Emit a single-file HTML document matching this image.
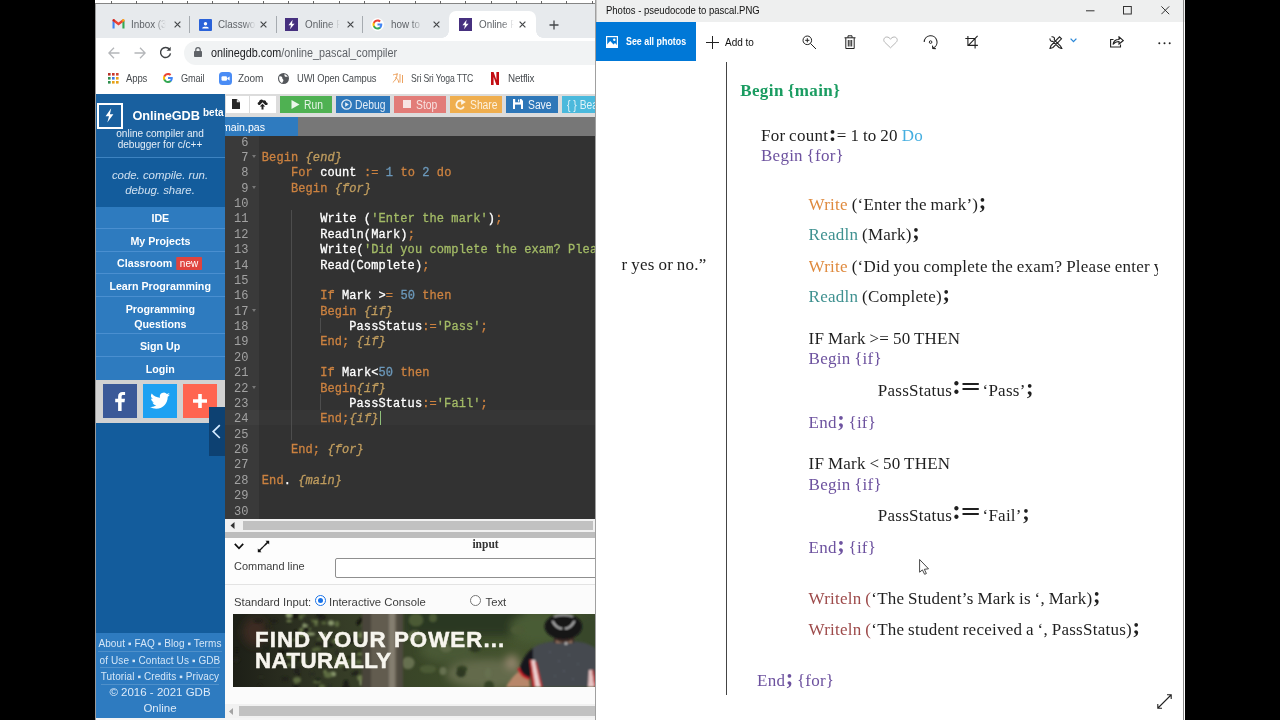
<!DOCTYPE html>
<html lang="en">
<head>
<meta charset="utf-8">
<title>OnlineGDB and Photos</title>
<style>
*{box-sizing:border-box;margin:0;padding:0}
html,body{width:1280px;height:720px;overflow:hidden;background:#000;font-family:"Liberation Sans",sans-serif;}
.abs{position:absolute}
#stage{position:relative;width:1280px;height:720px;overflow:hidden;background:#000;opacity:0.9999}
/* ---------- browser window ---------- */
#browser{position:absolute;left:95px;top:0;width:501px;height:720px;background:#fff;overflow:hidden}
#ruler{position:absolute;left:0;top:0;width:501px;height:4px;background:#fff;border-bottom:1px solid #858585}
#tabstrip{position:absolute;left:0;top:4px;width:501px;height:34px;background:#e7eaed}
.tab{position:absolute;top:0;height:34px;font-size:12px;color:#5f6368;white-space:nowrap}
.tab .tt{position:absolute;top:13px;left:0;font-size:12px;line-height:14px;letter-spacing:-0.1px}
.tabx{position:absolute;top:14px;width:11px;height:11px}
.tsep{position:absolute;top:12px;width:1px;height:17px;background:#a6abb0}
#toolbar{position:absolute;left:0;top:38px;width:501px;height:29px;background:#fff}
#urlpill{position:absolute;left:89px;top:3px;width:430px;height:24px;border-radius:12px;background:#f1f3f4}
#bookmarks{position:absolute;left:0;top:67px;width:501px;height:27px;background:#fff}
.bm{position:absolute;top:3.900px;font-size:10.6px;line-height:14px;color:#484c50;white-space:nowrap;letter-spacing:-0.15px}
/* ---------- page ---------- */
#page{position:absolute;left:0;top:94px;width:501px;height:626px;background:#fff;overflow:hidden}
#sidebar{position:absolute;left:0;top:0;width:130px;height:624px;background:#135c9c;color:#fff;text-align:center}

#sb-top{position:absolute;left:0;top:0;width:130px;height:63px;background:#19609f}
#logo{position:absolute;left:2px;top:9px;width:26px;height:26px;border:2.5px solid #fff}
#brand{position:absolute;left:37.500px;top:14.200px;font-size:12.8px;line-height:16px;font-weight:bold;color:#fff;white-space:nowrap;letter-spacing:-0.1px}
#beta{position:absolute;left:108px;top:13.200px;font-size:10px;line-height:12px;font-weight:bold;color:#fff}
.sub{position:absolute;left:0;width:130px;text-align:center;font-size:10.1px;line-height:12px;color:#e6eef7;white-space:nowrap}
#sb-sep{position:absolute;left:0;top:63px;width:130px;height:1px;background:#3d83c1}
.slog{position:absolute;left:0;width:130px;text-align:center;font-size:11.4px;line-height:14px;font-style:italic;color:#cfe0f0;white-space:nowrap}
#nav{position:absolute;left:0;top:113px;width:130px;height:173px;background:#2e7bbf}
.ni{position:absolute;left:0;width:130px;text-align:center;font-size:11.2px;line-height:14.5px;font-weight:bold;color:#fff;border-bottom:1px solid #4a8fd0;white-space:nowrap}
.ni>span.w{display:inline-block;transform:scaleX(.955)}
.new{display:inline-block;background:#e0443e;color:#fff;font-weight:normal;font-size:10.5px;line-height:13px;padding:0 4px;margin-left:4px;vertical-align:0.5px;border-radius:1px}
#social{position:absolute;left:0;top:286px;width:130px;height:43px;background:#d2d2d2}
.soc{position:absolute;top:4px;width:34px;height:34px}
#handle{position:absolute;left:114px;top:313px;width:16px;height:49px;background:#0d4172}
#footer{position:absolute;left:0;top:538.500px;width:130px;height:85.500px;background:#2e7bc0;color:#d4e6f7;text-align:center}
.fl{position:absolute;left:0;width:130px;text-align:center;font-size:10px;line-height:13px;white-space:nowrap;color:#d4e6f7;letter-spacing:0.1px}
.fl>span{display:inline-block;border-bottom:1px solid rgba(255,255,255,.16);padding-bottom:0.500px}
.fl u{text-decoration:none}
.fc{position:absolute;left:0;width:130px;text-align:center;font-size:11.5px;line-height:14px;white-space:nowrap;color:#dceaf8}

.sx{display:inline-block;transform-origin:0 50%;white-space:nowrap}
.tabt{position:absolute;top:13px;font-size:10.6px;line-height:14px;color:#5f6368;white-space:nowrap;overflow:hidden;height:14px}
.tabt i{position:absolute;right:0;top:0;width:14px;height:14px;font-style:normal}
#acttab{position:absolute;left:354px;top:7px;width:87px;height:27px;background:#fff;border-radius:7px 7px 0 0}
#acttab:before,#acttab:after{content:"";position:absolute;bottom:0;width:7px;height:7px;background:radial-gradient(circle at 0 0,rgba(255,255,255,0) 6.5px,#fff 7px)}
#acttab:before{left:-7px}
#acttab:after{right:-7px;background:radial-gradient(circle at 100% 0,rgba(255,255,255,0) 6.5px,#fff 7px)}
#winl{position:absolute;left:0;top:4px;width:1px;height:716px;background:#9a9a9a;z-index:50}
#winr{position:absolute;left:500px;top:0;width:1px;height:720px;background:#a0a0a0;z-index:50}

/* ---------- IDE ---------- */
#idebar{position:absolute;left:130px;top:0;width:371px;height:23px;background:#dcdcdc}
.btn{position:absolute;top:2px;height:17px;color:#f2f6fa;font-size:11.6px;line-height:17px;white-space:nowrap;overflow:hidden}
.btn .t{position:absolute;top:0.800px;font-size:12px;transform:scaleX(.86);transform-origin:0 50%}
#filetabs{position:absolute;left:130px;top:23px;width:371px;height:19px;background:#777}
#ftab{position:absolute;left:0;top:0;width:73px;height:19px;background:#2f7bbf;color:#fff;font-size:10.6px;line-height:21px;white-space:nowrap;overflow:hidden}
#editor{position:absolute;left:130px;top:42px;width:371px;height:383px;background:#323232;overflow:hidden}
#gutter{position:absolute;left:0;top:0;width:34px;height:383px;background:#3a3a3a}
#code{position:absolute;left:0;top:-0.500px;width:600px;-webkit-text-stroke:0.3px;font-family:"Liberation Mono",monospace;font-size:12px;letter-spacing:0.09px;color:#fff}
.ln{position:relative;height:15.375px;line-height:15.375px;white-space:pre}
.ln .n{position:absolute;left:0;width:23.5px;text-align:right;color:#a2a2a2;-webkit-text-stroke:0}
.ln .c{position:absolute;left:36.8px}
.ln .f{position:absolute;left:27px;top:4.500px;width:0;height:0;border-left:2.5px solid transparent;border-right:2.5px solid transparent;border-top:3px solid #777}
.k{color:#cc8240}.s{color:#a3bb66}.d{color:#6c99bb}.m{color:#bf9c5e;font-style:italic}
.guide{position:absolute;width:1px;background:#4d4d4d}
#hscroll{position:absolute;left:130px;top:425px;width:371px;height:13px;background:#f1f1f1}
#gband{position:absolute;left:130px;top:438px;width:371px;height:6px;background:#bdbdbd}
#panel{position:absolute;left:130px;top:444px;width:371px;height:182px;background:#fbfbfb;color:#333}

#panel .lbl{position:absolute;font-size:11.3px;line-height:14px;color:#3d3d3d;white-space:nowrap}
.radio{position:absolute;width:11px;height:11px;border-radius:50%;border:1px solid #767676;background:#fff}
#ad{position:absolute;left:8px;top:76px;width:380px;height:73px;overflow:hidden;background:#3a3d28}
.adt{position:absolute;left:22px;font-weight:bold;font-size:22.3px;line-height:22px;color:#f7f5ee;white-space:nowrap;letter-spacing:0.75px;-webkit-text-stroke:0.5px #f7f5ee}
#vscroll{position:absolute;left:130px;top:610px;width:371px;height:14px;background:#f1f1f1}

/* ---------- Photos window ---------- */
#photos{position:absolute;left:596px;top:0;width:589px;height:720px;background:#fff;overflow:hidden}
#ptitle{position:absolute;left:0;top:0;width:589px;height:22.3px;background:#eeefef}
#pbtn{position:absolute;left:0;top:22.300px;width:100px;height:38.300px;background:#0078d7}
.pt{position:absolute;margin-top:1px;word-spacing:-0.75px;font-family:"Liberation Serif",serif;font-size:17px;line-height:20px;letter-spacing:0.25px;white-space:nowrap;color:#1f1f1f}
.pt b.sc{font-size:22.5px;line-height:10px;letter-spacing:0;font-weight:bold;display:inline-block;margin:0 0 0 0.5px;transform:translateY(-0.8px)}
.pt b.co{font-size:27px;line-height:10px;letter-spacing:0;font-weight:bold;display:inline-block;margin:0 0 0 0;transform:translateY(-2px)}
.pt b.co2{font-size:23px;line-height:10px;letter-spacing:0;font-weight:bold;display:inline-block;margin:0 0.5px 0 0.5px;transform:translateY(0)}
.gr{color:#1a9c61}.pu{color:#6d529f}.or{color:#df8a3e}.te{color:#3f9190}.lb{color:#45aee0}.br{color:#9d4a4a}
</style>
</head>
<body>
<div id="stage">
  <div id="browser">
    <div id="ruler"><div class="abs" style="left:16.0px;top:1px;width:1px;height:3px;background:#666"></div><div class="abs" style="left:41.3px;top:1px;width:1px;height:3px;background:#666"></div><div class="abs" style="left:66.6px;top:1px;width:1px;height:3px;background:#666"></div><div class="abs" style="left:91.9px;top:1px;width:1px;height:3px;background:#666"></div><div class="abs" style="left:117.2px;top:1px;width:1px;height:3px;background:#666"></div><div class="abs" style="left:142.5px;top:1px;width:1px;height:3px;background:#666"></div><div class="abs" style="left:167.8px;top:1px;width:1px;height:3px;background:#666"></div><div class="abs" style="left:193.1px;top:1px;width:1px;height:3px;background:#666"></div><div class="abs" style="left:218.4px;top:1px;width:1px;height:3px;background:#666"></div><div class="abs" style="left:243.7px;top:1px;width:1px;height:3px;background:#666"></div><div class="abs" style="left:269.0px;top:1px;width:1px;height:3px;background:#666"></div><div class="abs" style="left:294.3px;top:1px;width:1px;height:3px;background:#666"></div><div class="abs" style="left:319.6px;top:1px;width:1px;height:3px;background:#666"></div><div class="abs" style="left:344.9px;top:1px;width:1px;height:3px;background:#666"></div><div class="abs" style="left:370.2px;top:1px;width:1px;height:3px;background:#666"></div><div class="abs" style="left:395.5px;top:1px;width:1px;height:3px;background:#666"></div><div class="abs" style="left:420.8px;top:1px;width:1px;height:3px;background:#666"></div><div class="abs" style="left:446.1px;top:1px;width:1px;height:3px;background:#666"></div><div class="abs" style="left:471.4px;top:1px;width:1px;height:3px;background:#666"></div><div class="abs" style="left:496.7px;top:1px;width:1px;height:3px;background:#666"></div></div><div id="winl"></div><div id="winr"></div>
    <div id="tabstrip">
      <svg class="abs" style="left:17px;top:15px" width="13" height="10" viewBox="0 0 13 10"><path d="M0.500 9.500 V1.400 L2.600 3 V9.500 Z" fill="#4285f4"/><path d="M12.500 9.500 V1.400 L10.400 3 V9.500 Z" fill="#34a853"/><path d="M0.500 1.400 C0.500 0.300 1.700 -0.200 2.600 0.500 L6.500 3.500 L10.400 0.500 C11.300 -0.200 12.500 0.300 12.500 1.400 L12.500 2 L6.500 6.500 L0.500 2 Z" fill="#ea4335"/><path d="M0.500 1.400 L2.600 3 L2.600 0.500 C1.700 -0.200 0.500 0.300 0.500 1.400Z" fill="#c5221f"/><path d="M12.500 1.400 L10.400 3 L10.400 0.500 C11.300 -0.200 12.500 0.300 12.500 1.400Z" fill="#fbbc04"/></svg>
      <div class="tabt" style="left:36px;width:37px"><span class="sx" style="transform:scaleX(.93)">Inbox (3)</span><i style="background:linear-gradient(90deg,rgba(231,234,237,0),#e7eaed 85%)"></i></div>
      <svg class="abs" style="left:79px;top:17px" width="7" height="7" viewBox="0 0 8 8"><path d="M0.7 0.7 L7.3 7.300 M7.300 0.7 L0.7 7.300" stroke="#44474a" stroke-width="1.350" fill="none"/></svg>
      <div class="tsep" style="left:94px"></div>
      <svg class="abs" style="left:104px;top:15px" width="13" height="12" viewBox="0 0 13 12"><rect width="13" height="12" rx="1" fill="#2a62d9"/><circle cx="6.500" cy="4.700" r="1.700" fill="#fff"/><path d="M3.300 9 C3.300 7.300 9.700 7.300 9.700 9 V9.400 H3.300Z" fill="#fff"/></svg>
      <div class="tabt" style="left:123px;width:40px"><span class="sx" style="transform:scaleX(.93)">Classwork</span><i style="background:linear-gradient(90deg,rgba(231,234,237,0),#e7eaed 85%)"></i></div>
      <svg class="abs" style="left:165px;top:17px" width="7" height="7" viewBox="0 0 8 8"><path d="M0.7 0.7 L7.3 7.300 M7.300 0.7 L0.7 7.300" stroke="#44474a" stroke-width="1.350" fill="none"/></svg>
      <div class="tsep" style="left:181px"></div>
      <svg class="abs" style="left:190px;top:14px" width="13" height="13" viewBox="0 0 13 13"><rect width="13" height="13" fill="#46307f"/><path d="M7.6 1.800 L3.500 7.200 L6 7.200 L5 11.300 L9.600 5.700 L7 5.700 Z" fill="#fff"/></svg>
      <div class="tabt" style="left:210px;width:37px"><span class="sx" style="transform:scaleX(.93)">Online Pascal</span><i style="background:linear-gradient(90deg,rgba(231,234,237,0),#e7eaed 85%)"></i></div>
      <svg class="abs" style="left:252px;top:17px" width="7" height="7" viewBox="0 0 8 8"><path d="M0.7 0.7 L7.3 7.300 M7.300 0.7 L0.7 7.300" stroke="#44474a" stroke-width="1.350" fill="none"/></svg>
      <div class="tsep" style="left:267px"></div>
      <svg class="abs" style="left:276px;top:14px" width="13" height="13" viewBox="0 0 13 13"><circle cx="6.500" cy="6.500" r="6.500" fill="#fff"/><g transform="translate(1.500,1.500)"><g transform="scale(0.4167)"><path d="M23.500 12.270 c0-.85-.08-1.670-.22-2.450 H12 v4.640 h6.450 c-.28 1.500-1.120 2.770-2.390 3.620 v3.010 h3.870 c2.260-2.090 3.570-5.160 3.570-8.820z" fill="#4285f4"/><path d="M12 24 c3.240 0 5.950-1.070 7.930-2.910 l-3.870-3.010 c-1.070.72-2.450 1.150-4.060 1.150 -3.120 0-5.770-2.110-6.710-4.950 H1.290 v3.110 C3.260 21.300 7.310 24 12 24z" fill="#34a853"/><path d="M5.290 14.280 c-.24-.72-.38-1.490-.38-2.280 s.14-1.560.38-2.280 V6.610 H1.290 C.47 8.230 0 10.060 0 12 s.47 3.770 1.290 5.390 l4-3.110z" fill="#fbbc05"/><path d="M12 4.770 c1.760 0 3.340.61 4.590 1.800 l3.430-3.430 C17.950 1.190 15.240 0 12 0 7.310 0 3.260 2.700 1.290 6.610 l4 3.110 c.94-2.840 3.590-4.950 6.710-4.950z" fill="#ea4335"/></g></g></svg>
      <div class="tabt" style="left:296px;width:34px"><span class="sx" style="transform:scaleX(.93)">how to use</span><i style="background:linear-gradient(90deg,rgba(231,234,237,0),#e7eaed 85%)"></i></div>
      <svg class="abs" style="left:338px;top:17px" width="7" height="7" viewBox="0 0 8 8"><path d="M0.7 0.7 L7.3 7.300 M7.300 0.7 L0.7 7.300" stroke="#44474a" stroke-width="1.350" fill="none"/></svg>
      <div id="acttab"></div>
      <svg class="abs" style="left:364px;top:14px" width="13" height="13" viewBox="0 0 13 13"><rect width="13" height="13" fill="#46307f"/><path d="M7.6 1.800 L3.500 7.200 L6 7.200 L5 11.300 L9.600 5.700 L7 5.700 Z" fill="#fff"/></svg>
      <div class="tabt" style="left:384px;width:37px"><span class="sx" style="transform:scaleX(.93)">Online Pascal</span><i style="background:linear-gradient(90deg,rgba(255,255,255,0),#fff 85%)"></i></div>
      <svg class="abs" style="left:424px;top:17px" width="7" height="7" viewBox="0 0 8 8"><path d="M0.7 0.7 L7.3 7.300 M7.300 0.7 L0.7 7.300" stroke="#44474a" stroke-width="1.350" fill="none"/></svg>
      <svg class="abs" style="left:454px;top:16px" width="10" height="10" viewBox="0 0 10 10"><path d="M5 0.500 V9.500 M0.500 5 H9.500" stroke="#44474a" stroke-width="1.300" fill="none"/></svg>
    </div>
    <div id="toolbar">
      <svg class="abs" style="left:13px;top:9px" width="12" height="12" viewBox="0 0 12 12"><path d="M11.500 6 H1.200 M6 0.800 L0.800 6 L6 11.200" stroke="#b4b6b9" stroke-width="1.300" fill="none"/></svg>
      <svg class="abs" style="left:39px;top:9px" width="12" height="12" viewBox="0 0 12 12"><path d="M0.500 6 H10.800 M6 0.800 L11.200 6 L6 11.200" stroke="#b4b6b9" stroke-width="1.300" fill="none"/></svg>
      <svg class="abs" style="left:64px;top:8px" width="13" height="13" viewBox="0 0 13 13"><path d="M10.600 3.500 A5 5 0 1 0 11.500 7.300" stroke="#3f4245" stroke-width="1.400" fill="none"/><path d="M11.700 0.700 V4.800 H7.600 Z" fill="#3f4245"/></svg>
      <div id="urlpill"></div>
      <svg class="abs" style="left:99px;top:9px" width="8" height="10" viewBox="0 0 8 10"><rect x="0" y="4" width="8" height="6" rx="0.800" fill="#5f6368"/><path d="M1.800 4.500 V2.800 A2.200 2.200 0 0 1 6.200 2.800 V4.500" stroke="#5f6368" stroke-width="1.200" fill="none"/></svg>
      <div class="abs" style="left:116px;top:8.300px;font-size:12px;line-height:15px;color:#5f6368;white-space:nowrap"><span class="sx" style="transform:scaleX(.9)"><span style="color:#202124">onlinegdb.com</span>/online_pascal_compiler</span></div>
    </div>
    <div id="bookmarks">
      <svg class="abs" style="left:13px;top:6px" width="11" height="11" viewBox="0 0 11 11"><rect x="0" y="0" width="2.600" height="2.600" fill="#b5322a"/><rect x="4" y="0" width="2.600" height="2.600" fill="#c8372d"/><rect x="8" y="0" width="2.600" height="2.600" fill="#d2452f"/><rect x="0" y="4" width="2.600" height="2.600" fill="#2f8f4e"/><rect x="4" y="4" width="2.600" height="2.600" fill="#3b78e0"/><rect x="8" y="4" width="2.600" height="2.600" fill="#e6a117"/><rect x="0" y="8" width="2.600" height="2.600" fill="#2f8f4e"/><rect x="4" y="8" width="2.600" height="2.600" fill="#e6a117"/><rect x="8" y="8" width="2.600" height="2.600" fill="#e6a117"/></svg>
      <div class="bm" style="left:31px"><span class="sx" style="transform:scaleX(.9)">Apps</span></div>
      <svg class="abs" style="left:68px;top:6px" width="10" height="10" viewBox="0 0 10 10"><g transform="scale(0.4167)"><path d="M23.500 12.270 c0-.85-.08-1.670-.22-2.450 H12 v4.640 h6.450 c-.28 1.500-1.120 2.770-2.390 3.620 v3.010 h3.870 c2.260-2.090 3.570-5.160 3.570-8.820z" fill="#4285f4"/><path d="M12 24 c3.240 0 5.950-1.070 7.930-2.910 l-3.870-3.010 c-1.070.72-2.450 1.150-4.060 1.150 -3.120 0-5.770-2.110-6.710-4.950 H1.290 v3.110 C3.260 21.300 7.310 24 12 24z" fill="#34a853"/><path d="M5.290 14.280 c-.24-.72-.38-1.490-.38-2.280 s.14-1.560.38-2.280 V6.610 H1.290 C.47 8.230 0 10.060 0 12 s.47 3.770 1.290 5.390 l4-3.110z" fill="#fbbc05"/><path d="M12 4.770 c1.760 0 3.340.61 4.590 1.800 l3.430-3.430 C17.950 1.190 15.240 0 12 0 7.310 0 3.260 2.700 1.290 6.610 l4 3.110 c.94-2.840 3.590-4.950 6.710-4.950z" fill="#ea4335"/></g></svg>
      <div class="bm" style="left:86px"><span class="sx" style="transform:scaleX(.87)">Gmail</span></div>
      <svg class="abs" style="left:124px;top:5px" width="13" height="13" viewBox="0 0 13 13"><rect width="13" height="13" rx="3.500" fill="#4a8cf5"/><rect x="2.500" y="4.200" width="5.500" height="4.600" rx="1.200" fill="#fff"/><path d="M8.300 6 L10.600 4.400 V8.600 L8.300 7Z" fill="#fff"/></svg>
      <div class="bm" style="left:143px"><span class="sx" style="transform:scaleX(.95)">Zoom</span></div>
      <svg class="abs" style="left:183px;top:6px" width="11" height="11" viewBox="0 0 11 11"><circle cx="5.500" cy="5.500" r="5.500" fill="#54575b"/><path d="M1.300 3.500 C3 3 4.500 3.800 4.300 5.200 C4.200 6.200 5.600 6.200 5.400 7.500 C5.300 8.500 4.300 8.800 4.300 10 C2 9.500 0.600 6.500 1.300 3.500Z M6.300 0.900 C7 2 6 2.800 7 3.400 C8 4 9 3.200 9.800 4.200 C9.300 2.500 8 1.200 6.300 0.900Z" fill="#fff"/></svg>
      <div class="bm" style="left:202px"><span class="sx" style="transform:scaleX(.885)">UWI Open Campus</span></div>
      <svg class="abs" style="left:297px;top:6px" width="12" height="11" viewBox="0 0 12 11"><path d="M1 2 C3 1 5 1.500 6 0.800 M5 0.500 C5.500 4 3 8 0.800 9.500 M3.300 4.500 C5 5 6.500 7 6.800 9.800 M8 1 V9.500 M10.500 2 V10" stroke="#eb9d57" stroke-width="0.950" fill="none"/></svg>
      <div class="bm" style="left:316px"><span class="sx" style="transform:scaleX(.815)">Sri Sri Yoga TTC</span></div>
      <svg class="abs" style="left:396px;top:5px" width="8" height="13" viewBox="0 0 8 13"><path d="M0 0 H2.600 L5.400 8 V0 H8 V13 H5.400 L2.600 5 V13 H0Z" fill="#c20d13"/></svg>
      <div class="bm" style="left:413px"><span class="sx" style="transform:scaleX(.93)">Netflix</span></div>
    </div>
    <div id="page">
      <div id="idebar">
        <div class="btn" style="left:1px;width:23px;background:#fff"><svg class="abs" style="left:6px;top:3px" width="8" height="10" viewBox="0 0 8 10"><path d="M0 0 H4.800 L8 3.200 V10 H0Z" fill="#262626"/><path d="M4.800 0.300 V3.200 H7.700Z" fill="#e8e8e8"/></svg></div>
        <div class="btn" style="left:24.800px;width:26.200px;background:#fff"><svg class="abs" style="left:6.900px;top:3.200px" width="11" height="11" viewBox="0 0 11 11"><path d="M2.500 6 C0.300 6 0 3.300 2 2.900 C2.300 0.800 4.800 -0.200 6.200 1.400 C7.800 0.600 9.300 1.700 9.100 3.200 C11.200 3.400 11.200 6 9.200 6 H8.300 L5.500 3.300 L2.800 6Z" fill="#222"/><path d="M5.500 4.700 L8.200 7.400 H6.500 V10.400 H4.500 V7.400 H2.800Z" fill="#222"/></svg></div>
        <div class="btn" style="left:55px;width:52px;background:#4fb152;color:#e6f4e6"><svg class="abs" style="left:11px;top:4px" width="9" height="9" viewBox="0 0 9 9"><path d="M0.500 0 L8.500 4.500 L0.500 9Z" fill="#eaf6ea"/></svg><span class="t" style="left:24px">Run</span></div>
        <div class="btn" style="left:111px;width:54px;background:#2f78ba;color:#e3edf7"><svg class="abs" style="left:5px;top:3px" width="11" height="11" viewBox="0 0 11 11"><circle cx="5.500" cy="5.500" r="4.700" stroke="#e8f0f8" stroke-width="1.300" fill="none"/><path d="M4.200 3.300 L7.800 5.500 L4.200 7.700Z" fill="#e8f0f8"/></svg><span class="t" style="left:19px">Debug</span></div>
        <div class="btn" style="left:169px;width:52px;background:#e27c78;color:#f8e3e2"><svg class="abs" style="left:9px;top:4px" width="8" height="8" viewBox="0 0 8 8"><rect width="8" height="8" fill="#f7e4e3"/></svg><span class="t" style="left:22px">Stop</span></div>
        <div class="btn" style="left:225px;width:52px;background:#efae4e;color:#fdf1dd"><svg class="abs" style="left:5px;top:3px" width="11" height="11" viewBox="0 0 11 11"><path d="M9 7.500 A4 4 0 1 1 6.500 1.800" stroke="#fdf3e2" stroke-width="1.700" fill="none"/><path d="M5.800 0 L10.800 3 L6.300 6Z" fill="#fdf3e2"/></svg><span class="t" style="left:20px">Share</span></div>
        <div class="btn" style="left:281px;width:52px;background:#2e77b8;color:#eef4fa"><svg class="abs" style="left:7px;top:3px" width="10" height="10" viewBox="0 0 10 10"><path d="M0 0 H8.300 L10 1.700 V10 H0Z" fill="#fff"/><rect x="2.200" y="0" width="4.800" height="3.300" fill="#2e77b8"/><rect x="5" y="0.500" width="1.300" height="2.200" fill="#fff"/><rect x="2" y="5.600" width="6" height="4.400" fill="#2e77b8"/></svg><span class="t" style="left:22px">Save</span></div>
        <div class="btn" style="left:337px;width:60px;background:#4bb9dc;color:#def2f9"><span class="t" style="left:5px">{ } Beautify</span></div>
      </div>
      <div id="filetabs"><div id="ftab"><span style="position:absolute;left:-3px">main.pas</span></div></div>
      <div id="editor">
        <div id="gutter"></div>
        <div class="abs" style="left:0;top:273.900px;width:371px;height:15.400px;background:#363636"></div>
        <div class="abs" style="left:0;top:273.900px;width:34px;height:15.400px;background:#3f3f3f"></div>
        <div class="guide" style="left:66px;top:73.800px;height:230.700px"></div>
        <div class="guide" style="left:95px;top:181.500px;height:15.400px"></div>
        <div class="guide" style="left:95px;top:258.400px;height:15.400px"></div>
        <div id="code">
<div class="ln"><span class="n">6</span><span class="c"></span></div>
<div class="ln"><span class="n">7</span><i class="f"></i><span class="c"><span class="k">Begin</span> <span class="m">{end}</span></span></div>
<div class="ln"><span class="n">8</span><span class="c">    <span class="k">For</span> count <span class="k">:=</span> <span class="d">1</span> <span class="k">to</span> <span class="d">2</span> <span class="k">do</span></span></div>
<div class="ln"><span class="n">9</span><i class="f"></i><span class="c">    <span class="k">Begin</span> <span class="m">{for}</span></span></div>
<div class="ln"><span class="n">10</span><span class="c"></span></div>
<div class="ln"><span class="n">11</span><span class="c">        Write (<span class="s">'Enter the mark'</span>)<span class="k">;</span></span></div>
<div class="ln"><span class="n">12</span><span class="c">        Readln(Mark)<span class="k">;</span></span></div>
<div class="ln"><span class="n">13</span><span class="c">        Write(<span class="s">'Did you complete the exam? Please enter yes or no.'</span>)<span class="k">;</span></span></div>
<div class="ln"><span class="n">14</span><span class="c">        Read(Complete)<span class="k">;</span></span></div>
<div class="ln"><span class="n">15</span><span class="c"></span></div>
<div class="ln"><span class="n">16</span><span class="c">        <span class="k">If</span> Mark &gt;<span class="k">=</span> <span class="d">50</span> <span class="k">then</span></span></div>
<div class="ln"><span class="n">17</span><i class="f"></i><span class="c">        <span class="k">Begin</span> <span class="m">{if}</span></span></div>
<div class="ln"><span class="n">18</span><span class="c">            PassStatus<span class="k">:=</span><span class="s">'Pass'</span><span class="k">;</span></span></div>
<div class="ln"><span class="n">19</span><span class="c">        <span class="k">End;</span> <span class="m">{if}</span></span></div>
<div class="ln"><span class="n">20</span><span class="c"></span></div>
<div class="ln"><span class="n">21</span><span class="c">        <span class="k">If</span> Mark&lt;<span class="d">50</span> <span class="k">then</span></span></div>
<div class="ln"><span class="n">22</span><i class="f"></i><span class="c">        <span class="k">Begin</span><span class="m">{if}</span></span></div>
<div class="ln"><span class="n">23</span><span class="c">            PassStatus<span class="k">:=</span><span class="s">'Fail'</span><span class="k">;</span></span></div>
<div class="ln"><span class="n">24</span><span class="c">        <span class="k">End;</span><span class="m">{if}</span></span></div>
<div class="ln"><span class="n">25</span><span class="c"></span></div>
<div class="ln"><span class="n">26</span><span class="c">    <span class="k">End;</span> <span class="m">{for}</span></span></div>
<div class="ln"><span class="n">27</span><span class="c"></span></div>
<div class="ln"><span class="n">28</span><span class="c"><span class="k">End</span>. <span class="m">{main}</span></span></div>
<div class="ln"><span class="n">29</span><span class="c"></span></div>
<div class="ln"><span class="n">30</span><span class="c"></span></div>
        </div>
        <div class="abs" style="left:155px;top:274.500px;width:1px;height:14.500px;background:#8fbf7a"></div>
      </div>
      <div id="hscroll">
        <svg class="abs" style="left:5px;top:3px" width="5" height="7" viewBox="0 0 5 7"><path d="M4.500 0 L0.500 3.500 L4.500 7Z" fill="#333"/></svg>
        <div class="abs" style="left:18px;top:2px;width:350px;height:9px;background:#c1c1c1"></div>
      </div>
      <div id="gband"></div>
      <div id="panel">
        <div class="abs" style="left:0;top:0;width:371px;height:46px;background:#fdfdfd"></div>
        <svg class="abs" style="left:9px;top:5px" width="10" height="7" viewBox="0 0 10 7"><path d="M0.800 0.800 L5 5.300 L9.200 0.800" stroke="#111" stroke-width="1.700" fill="none"/></svg>
        <svg class="abs" style="left:32px;top:1.500px" width="13" height="13" viewBox="0 0 13 13"><path d="M1.500 11.500 L11.500 1.500" stroke="#111" stroke-width="1.200" stroke-dasharray="2.800 1.600 20" fill="none"/><path d="M1.500 11.500 L5 8" stroke="#111" stroke-width="1.200"/><path d="M11.500 1.500 L8 5" stroke="#111" stroke-width="1.200"/><path d="M0.800 12.200 V8.500 L4.500 12.200Z M12.200 0.800 V4.500 L8.500 0.800Z" fill="#111"/></svg>
        <div class="abs" style="left:225.500px;top:-0.600px;width:70px;text-align:center;font-family:'Liberation Serif',serif;font-weight:bold;font-size:11.5px;line-height:14px;color:#333">input</div>
        <div class="lbl" style="left:9px;top:21px"><span class="sx" style="transform:scaleX(0.97)">Command line</span></div>
        <div class="abs" style="left:110px;top:20px;width:300px;height:20px;background:#fff;border:1px solid #8f8f8f;border-radius:2px"></div>
        <div class="abs" style="left:0;top:46px;width:371px;height:1px;background:#e3e3e3"></div>
        <div class="lbl" style="left:9px;top:56.500px"><span class="sx" style="transform:scaleX(1.0)">Standard Input:</span></div>
        <div class="radio" style="left:89.500px;top:57px;border-color:#1a73e8"><div class="abs" style="left:2px;top:2px;width:5px;height:5px;border-radius:50%;background:#1a73e8"></div></div>
        <div class="lbl" style="left:104px;top:56.500px"><span class="sx" style="transform:scaleX(1.0)">Interactive Console</span></div>
        <div class="radio" style="left:245px;top:57px"></div>
        <div class="lbl" style="left:260.500px;top:56.500px">Text</div>
        <div id="ad">
          <svg width="380" height="73" viewBox="0 0 380 73" style="position:absolute;left:0;top:0">
            <defs>
              <filter id="bl" x="-20%" y="-20%" width="140%" height="140%"><feGaussianBlur stdDeviation="4"/></filter>
              <filter id="bl1" x="-5%" y="-5%" width="110%" height="110%"><feGaussianBlur stdDeviation="1"/></filter>
              <filter id="bl2" x="-20%" y="-20%" width="140%" height="140%"><feGaussianBlur stdDeviation="0.8"/></filter>
              <linearGradient id="adg" x1="0" x2="1" y1="0" y2="0"><stop offset="0" stop-color="#1d1f17"/><stop offset="0.12" stop-color="#282b1e"/><stop offset="0.3" stop-color="#363d27"/><stop offset="0.5" stop-color="#3a4728"/><stop offset="0.75" stop-color="#44532e"/><stop offset="1" stop-color="#3c4a29"/></linearGradient>
            </defs>
            <rect width="380" height="73" fill="url(#adg)"/>
            <g filter="url(#bl)">
              <ellipse cx="22" cy="18" rx="12" ry="14" fill="#3d2c22"/>
              <rect x="172" y="-8" width="120" height="30" fill="#2c3720"/>
              <ellipse cx="255" cy="60" rx="42" ry="15" fill="#636b4b"/>
              <ellipse cx="215" cy="36" rx="28" ry="13" fill="#4a5936"/>
              <ellipse cx="305" cy="14" rx="28" ry="16" fill="#4a5c36"/>
              <ellipse cx="360" cy="20" rx="22" ry="22" fill="#384729"/><ellipse cx="279" cy="48" rx="6" ry="7" fill="#9a8a72"/>
            </g>
            <g filter="url(#bl1)"><ellipse cx="33" cy="34" rx="2.7" ry="2.3" fill="#20231a"/><ellipse cx="61" cy="45" rx="1.8" ry="2.0" fill="#55633a"/><ellipse cx="89" cy="3" rx="4.1" ry="3.1" fill="#20231a"/><ellipse cx="66" cy="61" rx="1.4" ry="1.1" fill="#1a1c14"/><ellipse cx="42" cy="43" rx="1.8" ry="1.5" fill="#2b2f20"/><ellipse cx="73" cy="20" rx="4.2" ry="3.2" fill="#2b2f20"/><ellipse cx="63" cy="17" rx="2.1" ry="1.2" fill="#15170f"/><ellipse cx="86" cy="1" rx="3.3" ry="1.5" fill="#1a1c14"/><ellipse cx="97" cy="72" rx="2.4" ry="1.2" fill="#2b2f20"/><ellipse cx="86" cy="30" rx="4.0" ry="1.3" fill="#1a1c14"/><ellipse cx="92" cy="58" rx="1.7" ry="2.2" fill="#6d7c4c"/><ellipse cx="98" cy="31" rx="2.4" ry="1.9" fill="#1a1c14"/><ellipse cx="128" cy="22" rx="3.9" ry="1.5" fill="#55633a"/><ellipse cx="79" cy="7" rx="4.2" ry="1.5" fill="#55633a"/><ellipse cx="85" cy="7" rx="2.9" ry="1.5" fill="#2b2f20"/><ellipse cx="98" cy="9" rx="3.0" ry="2.8" fill="#86946a"/><ellipse cx="120" cy="60" rx="1.9" ry="1.4" fill="#20231a"/><ellipse cx="128" cy="28" rx="2.6" ry="1.2" fill="#5b6a40"/><ellipse cx="107" cy="51" rx="2.0" ry="2.8" fill="#4a5733"/><ellipse cx="84" cy="68" rx="4.1" ry="1.3" fill="#55633a"/><ellipse cx="77" cy="15" rx="1.2" ry="1.6" fill="#5b6a40"/><ellipse cx="128" cy="21" rx="2.8" ry="3.1" fill="#6d7c4c"/><ellipse cx="126" cy="48" rx="3.3" ry="2.3" fill="#5b6a40"/><ellipse cx="61" cy="26" rx="2.1" ry="1.1" fill="#5b6a40"/><ellipse cx="85" cy="73" rx="1.4" ry="2.2" fill="#20231a"/><ellipse cx="117" cy="26" rx="3.3" ry="3.0" fill="#15170f"/><ellipse cx="4" cy="36" rx="1.2" ry="2.5" fill="#15170f"/><ellipse cx="65" cy="44" rx="1.4" ry="2.4" fill="#15170f"/><ellipse cx="56" cy="42" rx="2.5" ry="2.8" fill="#55633a"/><ellipse cx="115" cy="44" rx="2.6" ry="1.5" fill="#15170f"/><ellipse cx="84" cy="35" rx="3.9" ry="1.8" fill="#55633a"/><ellipse cx="115" cy="48" rx="2.5" ry="3.0" fill="#4a5733"/><ellipse cx="128" cy="31" rx="3.6" ry="3.0" fill="#15170f"/><ellipse cx="104" cy="10" rx="2.3" ry="3.0" fill="#5b6a40"/><ellipse cx="35" cy="12" rx="2.6" ry="1.6" fill="#20231a"/><ellipse cx="49" cy="38" rx="3.2" ry="2.6" fill="#15170f"/><ellipse cx="79" cy="60" rx="2.0" ry="2.3" fill="#2b2f20"/><ellipse cx="71" cy="1" rx="1.6" ry="2.0" fill="#4a5733"/><ellipse cx="128" cy="10" rx="1.3" ry="2.4" fill="#55633a"/><ellipse cx="111" cy="50" rx="1.8" ry="2.0" fill="#5b6a40"/><ellipse cx="68" cy="3" rx="1.9" ry="2.7" fill="#55633a"/><ellipse cx="27" cy="73" rx="1.7" ry="2.9" fill="#20231a"/><ellipse cx="126" cy="9" rx="2.6" ry="2.4" fill="#15170f"/><ellipse cx="71" cy="48" rx="2.7" ry="2.8" fill="#4a5733"/><ellipse cx="100" cy="60" rx="3.1" ry="2.6" fill="#86946a"/><ellipse cx="125" cy="39" rx="3.6" ry="1.7" fill="#1a1c14"/><ellipse cx="128" cy="6" rx="2.5" ry="2.2" fill="#15170f"/><ellipse cx="28" cy="63" rx="2.5" ry="1.1" fill="#2b2f20"/><ellipse cx="113" cy="73" rx="3.9" ry="2.1" fill="#15170f"/><ellipse cx="63" cy="69" rx="1.5" ry="1.5" fill="#4a5733"/><ellipse cx="72" cy="12" rx="2.7" ry="3.0" fill="#86946a"/><ellipse cx="111" cy="44" rx="2.1" ry="1.3" fill="#4a5733"/><ellipse cx="73" cy="15" rx="2.8" ry="2.1" fill="#1a1c14"/><ellipse cx="128" cy="40" rx="4.2" ry="1.3" fill="#6d7c4c"/><ellipse cx="104" cy="39" rx="2.4" ry="3.1" fill="#2b2f20"/><ellipse cx="64" cy="66" rx="4.0" ry="3.0" fill="#5b6a40"/><ellipse cx="89" cy="45" rx="4.0" ry="1.3" fill="#1a1c14"/><ellipse cx="90" cy="21" rx="3.4" ry="1.5" fill="#86946a"/><ellipse cx="91" cy="9" rx="2.7" ry="1.6" fill="#55633a"/><ellipse cx="3" cy="46" rx="3.7" ry="2.4" fill="#20231a"/><ellipse cx="68" cy="16" rx="1.8" ry="2.2" fill="#6d7c4c"/><ellipse cx="85" cy="66" rx="2.1" ry="1.7" fill="#20231a"/><ellipse cx="25" cy="7" rx="3.9" ry="1.3" fill="#1a1c14"/><ellipse cx="41" cy="7" rx="3.7" ry="1.9" fill="#20231a"/><ellipse cx="56" cy="7" rx="2.9" ry="1.8" fill="#2b2f20"/><ellipse cx="54" cy="37" rx="3.5" ry="2.1" fill="#20231a"/><ellipse cx="62" cy="2" rx="3.5" ry="2.3" fill="#15170f"/><ellipse cx="95" cy="61" rx="4.2" ry="3.0" fill="#5b6a40"/><ellipse cx="104" cy="50" rx="1.4" ry="1.2" fill="#86946a"/><ellipse cx="56" cy="1" rx="3.3" ry="2.9" fill="#86946a"/><ellipse cx="103" cy="27" rx="4.0" ry="2.3" fill="#5b6a40"/><ellipse cx="128" cy="64" rx="3.9" ry="3.1" fill="#6d7c4c"/><ellipse cx="113" cy="72" rx="3.6" ry="1.6" fill="#20231a"/><ellipse cx="52" cy="65" rx="3.8" ry="2.5" fill="#20231a"/><ellipse cx="86" cy="25" rx="2.6" ry="1.0" fill="#55633a"/><ellipse cx="78" cy="20" rx="4.1" ry="1.7" fill="#86946a"/><ellipse cx="63" cy="73" rx="3.1" ry="2.5" fill="#1a1c14"/><ellipse cx="83" cy="8" rx="1.9" ry="2.0" fill="#6d7c4c"/><ellipse cx="108" cy="20" rx="2.2" ry="2.2" fill="#55633a"/><ellipse cx="89" cy="73" rx="3.1" ry="2.8" fill="#55633a"/><ellipse cx="113" cy="69" rx="2.4" ry="3.1" fill="#1a1c14"/><ellipse cx="81" cy="36" rx="2.1" ry="1.9" fill="#55633a"/><ellipse cx="69" cy="21" rx="3.3" ry="1.7" fill="#6d7c4c"/><ellipse cx="60" cy="46" rx="2.4" ry="2.5" fill="#4a5733"/><ellipse cx="128" cy="69" rx="1.4" ry="3.0" fill="#86946a"/><ellipse cx="112" cy="55" rx="1.3" ry="1.2" fill="#15170f"/><ellipse cx="107" cy="52" rx="1.4" ry="1.9" fill="#5b6a40"/><ellipse cx="83" cy="11" rx="2.3" ry="1.3" fill="#55633a"/><ellipse cx="64" cy="57" rx="2.8" ry="3.2" fill="#20231a"/><ellipse cx="75" cy="8" rx="3.9" ry="2.7" fill="#2b2f20"/><ellipse cx="56" cy="51" rx="1.8" ry="1.6" fill="#6d7c4c"/><ellipse cx="61" cy="48" rx="1.8" ry="2.5" fill="#1a1c14"/><ellipse cx="56" cy="7" rx="2.8" ry="1.2" fill="#6d7c4c"/><ellipse cx="104" cy="46" rx="2.3" ry="2.1" fill="#4a5733"/><ellipse cx="123" cy="59" rx="2.5" ry="2.8" fill="#20231a"/><ellipse cx="229" cy="55" rx="5.3" ry="3.6" fill="#364325"/><ellipse cx="256" cy="72" rx="5.0" ry="5.2" fill="#364325"/><ellipse cx="227" cy="27" rx="3.6" ry="6.5" fill="#4c5a36"/><ellipse cx="242" cy="32" rx="6.4" ry="6.3" fill="#2d3820"/><ellipse cx="210" cy="57" rx="3.5" ry="3.9" fill="#667050"/><ellipse cx="182" cy="22" rx="7.3" ry="5.8" fill="#5b6744"/><ellipse cx="285" cy="16" rx="6.9" ry="4.3" fill="#4c5a36"/><ellipse cx="213" cy="32" rx="6.6" ry="6.6" fill="#5b6744"/><ellipse cx="228" cy="59" rx="4.8" ry="4.3" fill="#2d3820"/><ellipse cx="296" cy="53" rx="6.1" ry="3.3" fill="#5b6744"/><ellipse cx="175" cy="49" rx="6.5" ry="6.2" fill="#667050"/><ellipse cx="219" cy="28" rx="3.9" ry="5.4" fill="#364325"/><ellipse cx="195" cy="55" rx="8.3" ry="4.1" fill="#4c5a36"/><ellipse cx="200" cy="4" rx="4.0" ry="4.2" fill="#4c5a36"/><ellipse cx="255" cy="59" rx="3.4" ry="5.2" fill="#667050"/><ellipse cx="183" cy="6" rx="7.4" ry="6.6" fill="#4c5a36"/></g>
            <g filter="url(#bl2)">
              <rect x="129" y="-3" width="41" height="80" fill="#625c50"/>
              <rect x="129" y="-3" width="9" height="80" fill="#48443a"/>
              <rect x="156" y="-3" width="6" height="80" fill="#847e70"/>
              <rect x="164" y="-3" width="6" height="80" fill="#504b40"/>
            </g>
            <g filter="url(#bl2)">
              <path d="M299 35 C304 29.500 316 27.500 322 27.500 L340 27.500 C348 27.500 358 29.500 364 36 L368 73 L298 73 Z" fill="#454a50"/>
              <path d="M300 34 C294 38 289 46 287 53 L285 61 L297 65 L300 50Z" fill="#16181b"/>
              <path d="M273 73 C277 66 281 61 285 58 L296 64.500 L297 73Z" fill="#b8876b"/>
              <path d="M285.500 54 C287 60 291 63.500 296.500 65" stroke="#c8202a" stroke-width="2.600" fill="none"/>
              <path d="M297.500 46 L302 46 L308.500 73 L300.500 73 Z" fill="#ecd2d2"/>
              <path d="M296.500 46 L298.300 46 L302.500 73 L299.500 73Z" fill="#c42a2a"/>
              <path d="M302 48 L303.500 48 L309.500 73 L307.500 73Z" fill="#c42a2a"/>
              <path d="M356 56 L359 56 L361.500 73 L355 73Z" fill="#e6c4c4"/>
              <path d="M359 56 L360.500 56 L364 73 L361.500 73Z" fill="#c42a2a"/>
              <rect x="321" y="23" width="20" height="6" fill="#3a2c26"/>
              <path d="M323 26 C327 29.500 335 29.500 339 26 L339 29 H323Z" fill="#9c7660"/>
              <ellipse cx="330.300" cy="12.500" rx="18.800" ry="12.800" fill="#131416"/>
              <path d="M319.500 7 C322 12 325.500 14.500 329 14.500 M341.500 7 C339 12 335.500 14.500 332 14.500" stroke="#d8d8d8" stroke-width="1.500" fill="none"/>
              <path d="M321 2.500 C326 0.300 335 0.300 340 2.500" stroke="#a8a8a8" stroke-width="1.600" fill="none"/>
              <circle cx="333" cy="29.500" r="1.300" fill="#cfcfcf"/>
              <g fill="#7d838a"><circle cx="317" cy="38" r="0.600"/><circle cx="326" cy="47" r="0.600"/><circle cx="336" cy="41" r="0.500"/><circle cx="331" cy="57" r="0.600"/><circle cx="345" cy="50" r="0.500"/><circle cx="322" cy="62" r="0.500"/><circle cx="340" cy="65" r="0.600"/></g>
            </g>
          </svg>
          <div class="adt" style="top:15.100px;letter-spacing:1.050px">FIND YOUR POWER...</div>
          <div class="adt" style="top:36.400px;letter-spacing:0.450px">NATURALLY</div>
        </div>
      </div>
      <div id="vscroll">
        <svg class="abs" style="left:4px;top:4px" width="4" height="7" viewBox="0 0 4 7"><path d="M4 0 L0 3.500 L4 7Z" fill="#a3a3a3"/></svg>
        <div class="abs" style="left:14px;top:2px;width:357px;height:10px;background:#c1c1c1"></div>
      </div>
      <div class="abs" style="left:0;top:624px;width:501px;height:2px;background:#f4f4f4"></div>
      <div id="sidebar">
        <div id="sb-top">
          <div id="logo"><svg width="21" height="21" viewBox="0 0 21 21" style="position:absolute;left:0;top:0"><path d="M12.2 3.2 L6.6 11.3 L10 11.3 L8.3 17.6 L14.4 9.2 L10.9 9.2 Z" fill="#fff"/></svg></div>
          <div id="brand">OnlineGDB</div>
          <div id="beta">beta</div>
          <div class="sub" style="top:34.200px">online compiler and</div>
          <div class="sub" style="top:45px">debugger for c/c++</div>
        </div>
        <div id="sb-sep"></div>
        <div class="slog" style="top:74px">code. compile. run.</div>
        <div class="slog" style="top:89.300px">debug. share.</div>
        <div id="nav">
          <div class="ni" style="top:0;height:22px;padding-top:4px"><span class="w">IDE</span></div>
          <div class="ni" style="top:22px;height:23px;padding-top:5px"><span class="w">My Projects</span></div>
          <div class="ni" style="top:45px;height:22px;padding-top:4px"><span class="w">Classroom<span class="new">new</span></span></div>
          <div class="ni" style="top:67px;height:23px;padding-top:5px"><span class="w">Learn Programming</span></div>
          <div class="ni" style="top:90px;height:37px;padding-top:5px"><span class="w">Programming<br>Questions</span></div>
          <div class="ni" style="top:127px;height:23px;padding-top:5px"><span class="w">Sign Up</span></div>
          <div class="ni" style="top:150px;height:23px;padding-top:5px;border-bottom:0"><span class="w">Login</span></div>
        </div>
        <div id="social">
          <div class="soc" style="left:8px;background:#3b5998"><svg width="34" height="34" viewBox="0 0 34 34"><path d="M18.6 27 V18.2 H21.5 L22 14.8 H18.6 V12.7 C18.6 11.7 18.9 11.1 20.3 11.1 H22.1 V8.1 C21.8 8.1 20.7 8 19.5 8 C16.9 8 15.1 9.6 15.1 12.4 V14.8 H12.2 V18.2 H15.1 V27 Z" fill="#fff"/></svg></div>
          <div class="soc" style="left:48px;background:#1da1f2"><svg width="34" height="34" viewBox="0 0 34 34"><path d="M27 10.6 c-.7.3-1.500.5-2.300.6 .8-.5 1.500-1.300 1.800-2.200 -.8.500-1.700.8-2.600 1 a4 4 0 0 0-6.900 3.700 c-3.400-.2-6.300-1.800-8.300-4.200 a4 4 0 0 0 1.200 5.400 c-.7 0-1.300-.2-1.800-.5 0 2 1.400 3.600 3.200 4 -.6.200-1.200.2-1.800.1 .5 1.600 2 2.800 3.800 2.800 A8.100 8.100 0 0 1 7 23 a11.400 11.400 0 0 0 6.200 1.800 c7.400 0 11.500-6.200 11.500-11.500 v-.5 c.8-.6 1.500-1.300 2-2.100z" fill="#fff"/></svg></div>
          <div class="soc" style="left:88px;background:#ff6550"><svg width="34" height="34" viewBox="0 0 34 34"><path d="M15.200 10 h3.600 v5.200 h5.200 v3.600 h-5.200 v5.200 h-3.600 v-5.200 h-5.200 v-3.600 h5.200z" fill="#fff"/></svg></div>
        </div>
        <div id="handle"><svg width="16" height="49" viewBox="0 0 16 49"><path d="M10.800 18.200 L4.200 24.600 L10.800 31" fill="none" stroke="#d4eaff" stroke-width="1.700"/></svg></div>
        <div id="footer">
          <div class="fl" style="top:4.500px"><span><u>About</u> ▪ <u>FAQ</u> ▪ <u>Blog</u> ▪ <u>Terms</u></span></div>
          <div class="fl" style="top:21.200px"><span><u>of Use</u> ▪ <u>Contact Us</u> ▪ <u>GDB</u></span></div>
          <div class="fl" style="top:37.900px"><span><u>Tutorial</u> ▪ <u>Credits</u> ▪ <u>Privacy</u></span></div>
          <div class="fc" style="top:52.500px">© 2016 - 2021 GDB</div>
          <div class="fc" style="top:68px">Online</div>
        </div>
      </div>
    </div>
  </div>
<div id="photos">
    <div id="ptitle">
      <div class="abs" style="left:10px;top:4px;font-size:10.5px;line-height:13px;color:#111;white-space:nowrap"><span class="sx" style="transform:scaleX(.905)">Photos - pseudocode to pascal.PNG</span></div>
      <svg class="abs" style="left:490px;top:9.500px" width="9" height="2" viewBox="0 0 9 2"><rect width="8.500" height="1" y="0.300" fill="#333"/></svg>
      <svg class="abs" style="left:527px;top:6px" width="9" height="9" viewBox="0 0 9 9"><rect x="0.500" y="0.500" width="7.800" height="7.500" fill="none" stroke="#333" stroke-width="1"/></svg>
      <svg class="abs" style="left:565px;top:6px" width="9" height="9" viewBox="0 0 9 9"><path d="M0.400 0.400 L8.200 8.200 M8.200 0.400 L0.400 8.200" stroke="#333" stroke-width="1" fill="none"/></svg>
    </div>
    <div id="pbtn">
      <svg class="abs" style="left:10px;top:13.500px" width="12" height="12" viewBox="0 0 12 12"><rect x="0.600" y="0.600" width="10.800" height="10.800" fill="none" stroke="#fff" stroke-width="1.200"/><path d="M0.600 9 L4.200 5 L7.500 8.500 L9 7 L11.400 9.500 V11.400 H0.600Z" fill="#fff"/><circle cx="8.300" cy="3.800" r="1.200" fill="#fff"/></svg>
      <div class="abs" style="left:29.500px;top:13px;font-size:10.2px;font-weight:bold;line-height:13px;color:#fff;white-space:nowrap"><span class="sx" style="transform:scaleX(.87)">See all photos</span></div>
    </div>
    <svg class="abs" style="left:110px;top:36px" width="13" height="13" viewBox="0 0 13 13"><path d="M6.500 0 V13 M0 6.500 H13" stroke="#222" stroke-width="1" fill="none"/></svg>
    <div class="abs" style="left:129px;top:35.500px;font-size:10.2px;line-height:13px;color:#111;white-space:nowrap"><span class="sx" style="transform:scaleX(.98)">Add to</span></div>
    <!-- zoom -->
    <svg class="abs" style="left:206px;top:35px" width="15" height="15" viewBox="0 0 15 15"><circle cx="5.300" cy="5.300" r="4.300" fill="none" stroke="#222" stroke-width="1"/><path d="M8.400 8.400 L14 14 M3.200 5.300 H7.400 M5.300 3.200 V7.400" stroke="#222" stroke-width="1" fill="none"/></svg>
    <!-- trash -->
    <svg class="abs" style="left:247.500px;top:35px" width="12" height="15" viewBox="0 0 12 15"><path d="M0.500 2.800 H11.500 M4 2.800 V0.800 H8 V2.800 M1.800 2.800 V13.500 H10.200 V2.800 M4.300 5 V11.500 M6 5 V11.500 M7.700 5 V11.500" stroke="#222" stroke-width="1" fill="none"/></svg>
    <!-- heart -->
    <svg class="abs" style="left:287px;top:36px" width="15" height="13" viewBox="0 0 15 13"><path d="M7.500 11.800 L1.700 6.200 C-0.200 4.200 1 1 3.800 1 C5.500 1 6.800 2 7.500 3.300 C8.200 2 9.500 1 11.200 1 C14 1 15.200 4.200 13.300 6.200 Z" fill="none" stroke="#b5b5b5" stroke-width="1"/></svg>
    <!-- rotate -->
    <svg class="abs" style="left:327px;top:35px" width="15" height="15" viewBox="0 0 15 15"><path d="M1.200 7 A6.400 6.400 0 1 1 10 13.100" fill="none" stroke="#222" stroke-width="1.100"/><path d="M9.500 10.600 L9.800 13.400 L12.800 13.600" fill="none" stroke="#222" stroke-width="1.100"/><circle cx="7.600" cy="7.100" r="1.300" fill="none" stroke="#222" stroke-width="1"/></svg>
    <!-- crop -->
    <svg class="abs" style="left:368.500px;top:35px" width="14" height="15" viewBox="0 0 14 15"><path d="M0.300 3.500 H10.100 V13.500 M2.900 0.900 V10.400 H12.900 M12.600 0.900 L3.400 10.300" fill="none" stroke="#222" stroke-width="1.100"/></svg>
    <!-- edit -->
    <svg class="abs" style="left:452.500px;top:36px" width="14" height="13" viewBox="0 0 14 13"><path d="M1 12.500 L2 9.500 L10.500 0.800 L12.500 2.800 L4 11.500 Z M2.500 0.800 C4.500 0.300 6 2 5.300 3.800 L11.500 10 L13 12.800 L10 11.500 L3.800 5.300 C2 5.800 0.500 4 1.200 2.500" fill="none" stroke="#222" stroke-width="1.100"/></svg>
    <svg class="abs" style="left:473.800px;top:38.200px" width="7" height="5" viewBox="0 0 7 5"><path d="M0.600 0.600 L3.500 3.600 L6.400 0.600" fill="none" stroke="#2b88d8" stroke-width="1.300"/></svg>
    <!-- share -->
    <svg class="abs" style="left:514px;top:36px" width="14" height="12" viewBox="0 0 14 12"><path d="M3.500 3.500 H0.600 V11 H10.500 V8.500" fill="none" stroke="#222" stroke-width="1.100"/><path d="M3 8.500 C3.500 5 6 3.500 9 3.500 V0.800 L13.300 4.500 L9 8 V5.500 C6.500 5.500 4.500 6.500 3 8.500Z" fill="none" stroke="#222" stroke-width="1.100"/></svg>
    <!-- dots -->
    <svg class="abs" style="left:562px;top:41.500px" width="13" height="3" viewBox="0 0 13 3"><circle cx="1.300" cy="1.300" r="1" fill="#222"/><circle cx="6.500" cy="1.300" r="1" fill="#222"/><circle cx="11.700" cy="1.300" r="1" fill="#222"/></svg>

    <!-- the picture -->
    <div class="abs" style="left:129.500px;top:61.500px;width:1.500px;height:633px;background:#444"></div>
    <div class="pt" style="left:25.6px;top:253.5px;">r yes or no.”</div>
    <div class="pt" style="left:144.2px;top:79.5px;color:#1a9c61;letter-spacing:0.4px"><b>Begin {main}</b></div>
    <div class="pt" style="left:165.0px;top:124.5px;">For count<b class="co2">:</b>= 1 to 20 <span class="lb">Do</span></div>
    <div class="pt" style="left:165.0px;top:145.0px;color:#6d529f">Begin {for}</div>
    <div class="pt" style="left:212.6px;top:193.5px;"><span class="or">Write</span> (‘Enter the mark’)<b class="sc">;</b></div>
    <div class="pt" style="left:212.6px;top:224.3px;"><span class="te">Readln</span> (Mark)<b class="sc">;</b></div>
    <div class="pt" style="left:212.6px;top:255.5px;width:349.5px;overflow:hidden"><span class="or">Write</span> (‘Did you complete the exam? Please enter yes or no.”</div>
    <div class="pt" style="left:212.6px;top:286.2px;"><span class="te">Readln</span> (Complete)<b class="sc">;</b></div>
    <div class="pt" style="left:212.6px;top:328.0px;">IF Mark &gt;= 50 THEN</div>
    <div class="pt" style="left:212.6px;top:347.8px;color:#6d529f">Begin {if}</div>
    <div class="pt" style="left:281.8px;top:379.9px;">PassStatus<b class="co">:</b><span style="display:inline-block;font-size:27px;font-weight:bold;line-height:10px;transform:scaleX(1.3) translateY(-0.5px);margin:0 4px 0 2px;letter-spacing:0">=</span>‘Pass’<b class="sc">;</b></div>
    <div class="pt" style="left:212.6px;top:411.5px;color:#6d529f">End<b class="sc">;</b> {if}</div>
    <div class="pt" style="left:212.6px;top:453.3px;">IF Mark &lt; 50 THEN</div>
    <div class="pt" style="left:212.6px;top:473.7px;color:#6d529f">Begin {if}</div>
    <div class="pt" style="left:281.8px;top:505.0px;">PassStatus<b class="co">:</b><span style="display:inline-block;font-size:27px;font-weight:bold;line-height:10px;transform:scaleX(1.3) translateY(-0.5px);margin:0 4px 0 2px;letter-spacing:0">=</span>‘Fail’<b class="sc">;</b></div>
    <div class="pt" style="left:212.6px;top:536.9px;color:#6d529f">End<b class="sc">;</b> {if}</div>
    <div class="pt" style="left:212.6px;top:588.3px;"><span class="br">Writeln (</span>‘The Student’s Mark is ‘, Mark)<b class="sc">;</b></div>
    <div class="pt" style="left:212.6px;top:618.5px;"><span class="br">Writeln (</span>‘The student received a ‘, PassStatus)<b class="sc">;</b></div>
    <div class="pt" style="left:161.0px;top:669.5px;color:#6d529f">End<b class="sc">;</b> {for}</div>
    <!-- cursor -->
    <svg class="abs" style="left:323px;top:559.300px" width="11" height="17" viewBox="0 0 11 17"><path d="M0.600 0.500 V13.200 L3.400 10.900 L5.600 15.300 L7.400 14.500 L5.300 10.300 L9.500 9.800 Z" fill="#fff" stroke="#333" stroke-width="0.900" stroke-linejoin="round"/></svg>
    <!-- fullscreen -->
    <svg class="abs" style="left:561px;top:694px" width="15" height="15" viewBox="0 0 15 15"><path d="M1 14 L14 1 M10 0.800 H14.200 V5 M0.800 10 V14.200 H5" fill="none" stroke="#222" stroke-width="1.100"/></svg>
    <div class="abs" style="left:586.800px;top:0;width:1px;height:720px;background:#8a8a8a"></div>
    <div class="abs" style="left:0;top:0;width:1px;height:22px;background:#c8c8c8"></div>
  </div>
</div>
</body>
</html>
